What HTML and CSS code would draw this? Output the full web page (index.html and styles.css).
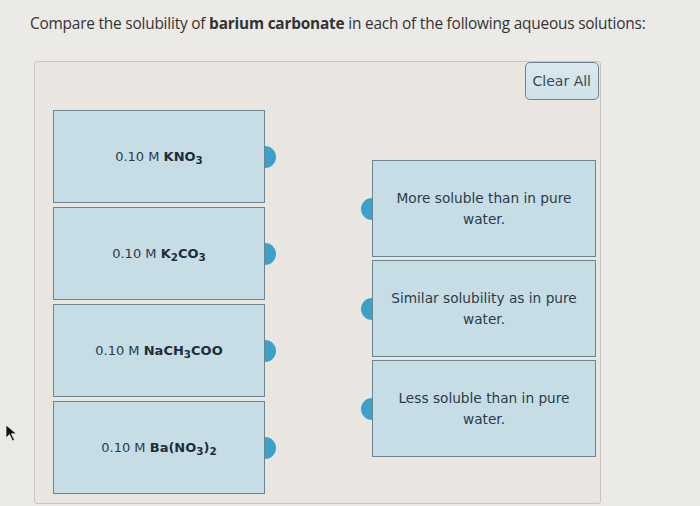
FILE: index.html
```html
<!DOCTYPE html>
<html lang="en">
<head>
  <meta charset="UTF-8">
  <meta name="viewport" content="width=device-width, initial-scale=1.0">
  <title>Solubility Matching</title>
  <link rel="stylesheet" href="styles.css">
</head>
<body>

  <p class="question">Compare the solubility of <b>barium carbonate</b> in each of the following aqueous solutions:</p>

  <div class="panel">
    <div class="toolbar">
      <button class="clear-btn">Clear All</button>
    </div>

    <div class="board">
      <!-- Solutions (drag sources) -->
      <div class="sources">
        <div class="card source">0.10 M&nbsp;<b>KNO<sub>3</sub></b></div>
        <div class="card source">0.10 M&nbsp;<b>K<sub>2</sub>CO<sub>3</sub></b></div>
        <div class="card source">0.10 M&nbsp;<b>NaCH<sub>3</sub>COO</b></div>
        <div class="card source">0.10 M&nbsp;<b>Ba(NO<sub>3</sub>)<sub>2</sub></b></div>
      </div>

      <!-- Answers (drop targets) -->
      <div class="targets">
        <div class="card target">More soluble than in pure water.</div>
        <div class="card target">Similar solubility as in pure water.</div>
        <div class="card target">Less soluble than in pure water.</div>
      </div>
    </div>
  </div>

  <!-- mouse pointer -->
  <svg class="pointer" width="14" height="18" viewBox="0 0 14 18">
    <path d="M1 1 L1 14 L4.5 10.5 L7.5 17 L9.5 16 L6.5 9.8 L11.5 9.8 Z" fill="#111" stroke="#eee" stroke-width="0.8"/>
  </svg>

</body>
</html>
```

FILE: styles.css
```css
body {
  margin: 0;
  background: #ebeae7;
  font-family: "Open Sans", Arial, sans-serif;
  color: #333;
  position: relative;
  height: 506px;
  overflow: hidden;
}

.question {
  margin: 0;
  padding: 13px 0 0 30px;
  height: 61px;
  box-sizing: border-box;
  font-size: 15.4px;
  letter-spacing: -0.2px;
}

.panel {
  margin-left: 34px;
  width: 567px;
  height: 443px;
  box-sizing: border-box;
  border: 1px solid #c8c6c1;
  border-radius: 3px;
  background: #e9e6e1;
}

.toolbar {
  display: flex;
  justify-content: flex-end;
  padding-right: 1px;
}

.clear-btn {
  height: 38px;
  padding: 0 7px;
  border: 1px solid #6d8590;
  border-radius: 5px;
  background: linear-gradient(#d9e8ee, #cfe1e8);
  font-family: "DejaVu Sans", Verdana, sans-serif;
  font-size: 14px;
  color: #3a4855;
}

.board {
  display: flex;
  justify-content: space-between;
  padding: 0 4px 0 18px;
  margin-top: 10px;
}

.sources {
  display: flex;
  flex-direction: column;
  gap: 4px;
  width: 212px;
}

.targets {
  display: flex;
  flex-direction: column;
  gap: 3px;
  width: 224px;
  margin-top: 50px;
}

.card {
  position: relative;
  display: flex;
  align-items: center;
  justify-content: center;
  box-sizing: border-box;
  padding: 0 18px;
  background: #c6dde6;
  border: 1px solid #6c8590;
  text-align: center;
  font-family: "DejaVu Sans", Verdana, sans-serif;
  font-size: 13px;
  color: #2c3b48;
}

.card b {
  color: #1f2d3b;
}

.card sub {
  font-size: 0.8em;
  vertical-align: -3px;
  line-height: 0;
}

.source {
  height: 93px;
}

.target {
  height: 97px;
  font-size: 13.7px;
  line-height: 21px;
}

/* half-round handles on the card edges */
.card::after {
  content: "";
  position: absolute;
  top: 50%;
  width: 11px;
  height: 22px;
  margin-top: -11px;
  background: #3ba1c9;
}

.source::after {
  right: -12px;
  border-radius: 0 11px 11px 0;
}

.target::after {
  left: -12px;
  border-radius: 11px 0 0 11px;
}

.pointer {
  position: absolute;
  left: 5px;
  top: 424px;
}
```
